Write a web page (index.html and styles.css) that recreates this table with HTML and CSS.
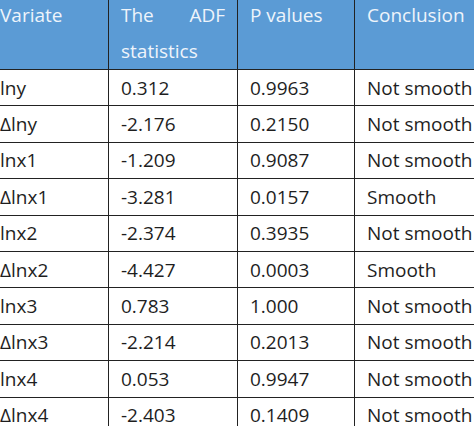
FILE: index.html
```html
<!DOCTYPE html>
<html lang="en">
<head>
  <meta charset="UTF-8" />
  <meta name="viewport" content="width=device-width, initial-scale=1" />
  <title>ADF test results</title>
  <link rel="stylesheet" href="styles.css">
</head>
<body>
  <table class="adf">
    <colgroup>
      <col class="c-var">
      <col class="c-adf">
      <col class="c-p">
      <col class="c-con">
    </colgroup>
    <thead>
      <tr>
        <th>Variate</th>
        <th class="just">The ADF statistics</th>
        <th>P values</th>
        <th>Conclusion</th>
      </tr>
    </thead>
    <tbody>
      <tr><td>lny</td><td>0.312</td><td>0.9963</td><td>Not smooth</td></tr>
      <tr><td>&Delta;lny</td><td>-2.176</td><td>0.2150</td><td>Not smooth</td></tr>
      <tr><td>lnx1</td><td>-1.209</td><td>0.9087</td><td>Not smooth</td></tr>
      <tr><td>&Delta;lnx1</td><td>-3.281</td><td>0.0157</td><td>Smooth</td></tr>
      <tr><td>lnx2</td><td>-2.374</td><td>0.3935</td><td>Not smooth</td></tr>
      <tr><td>&Delta;lnx2</td><td>-4.427</td><td>0.0003</td><td>Smooth</td></tr>
      <tr><td>lnx3</td><td>0.783</td><td>1.000</td><td>Not smooth</td></tr>
      <tr><td>&Delta;lnx3</td><td>-2.214</td><td>0.2013</td><td>Not smooth</td></tr>
      <tr><td>lnx4</td><td>0.053</td><td>0.9947</td><td>Not smooth</td></tr>
      <tr><td>&Delta;lnx4</td><td>-2.403</td><td>0.1409</td><td>Not smooth</td></tr>
    </tbody>
  </table>
</body>
</html>
```

FILE: styles.css
```css
html, body {
  margin: 0;
  padding: 0;
  background: #fff;
  overflow: hidden;
}

body {
  font-family: 'Open Sans', 'Noto Sans', sans-serif;
  font-size: 19px;
  color: #1e1e1e;
}

/* Table is cropped on the left, top and right */
.adf {
  border-collapse: collapse;
  table-layout: fixed;
  width: 520px;
  margin-left: -13px;
  margin-top: -4px;
}

.c-var { width: 121px; }
.c-adf { width: 129px; }
.c-p   { width: 117px; }
.c-con { width: 153px; }

.adf th,
.adf td {
  border: 1px solid #222;
  padding: 0 12px;
  text-align: left;
  white-space: nowrap;
}

.adf th {
  background-color: #5b9bd5;
  color: #eef4fb;
  font-weight: normal;
  vertical-align: top;
  line-height: 36px;
  height: 72px;
  box-sizing: border-box;
}

.adf th.just {
  white-space: normal;
  text-align: justify;
}

.adf td {
  height: 35.4px;
  line-height: 24px;
  vertical-align: middle;
}
```
